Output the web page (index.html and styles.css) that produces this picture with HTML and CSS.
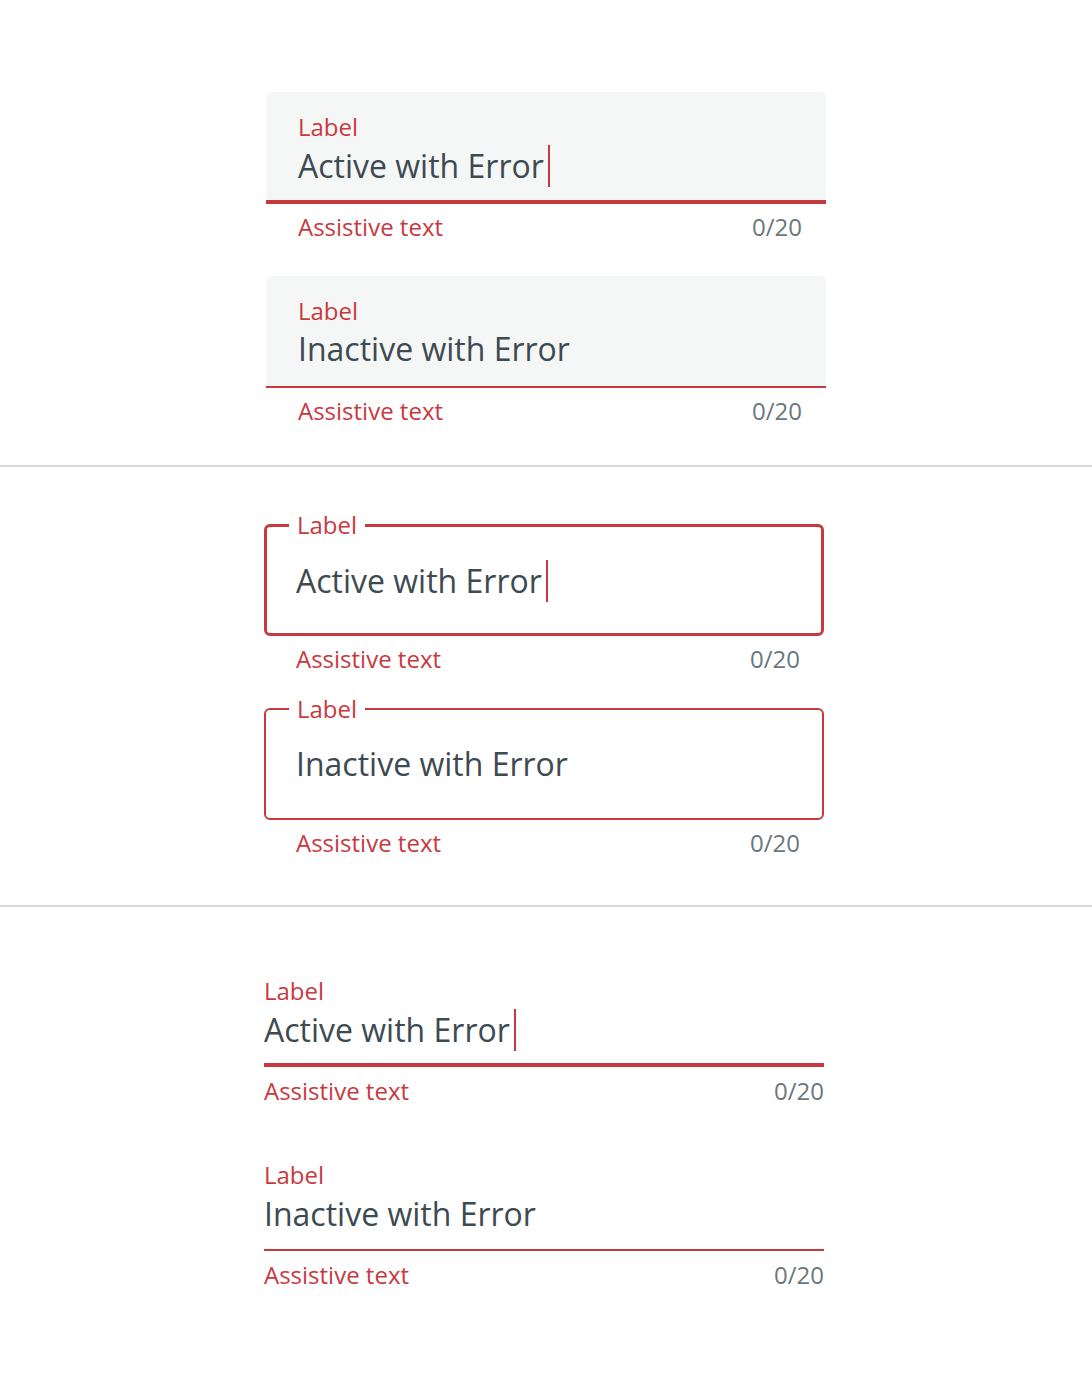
FILE: index.html
```html
<!DOCTYPE html>
<html lang="en">
<head>
<meta charset="utf-8">
<title>Text fields with error</title>
<link rel="stylesheet" href="styles.css">
</head>
<body>
  <section class="group group-filled">
    <div class="field field-filled is-active">
      <div class="box">
        <div class="label">Label</div>
        <div class="value">Active with Error<span class="caret"></span></div>
      </div>
      <div class="helper"><span>Assistive text</span><span class="count">0/20</span></div>
    </div>
    <div class="field field-filled">
      <div class="box">
        <div class="label">Label</div>
        <div class="value">Inactive with Error</div>
      </div>
      <div class="helper"><span>Assistive text</span><span class="count">0/20</span></div>
    </div>
  </section>
  <hr class="divider">
  <section class="group group-outlined">
    <div class="field field-outlined is-active">
      <div class="box">
        <div class="label">Label</div>
        <div class="value">Active with Error<span class="caret"></span></div>
      </div>
      <div class="helper"><span>Assistive text</span><span class="count">0/20</span></div>
    </div>
    <div class="field field-outlined">
      <div class="box">
        <div class="label">Label</div>
        <div class="value">Inactive with Error</div>
      </div>
      <div class="helper"><span>Assistive text</span><span class="count">0/20</span></div>
    </div>
  </section>
  <hr class="divider">
  <section class="group group-line">
    <div class="field field-line is-active">
      <div class="box">
        <div class="label">Label</div>
        <div class="value">Active with Error<span class="caret"></span></div>
      </div>
      <div class="helper"><span>Assistive text</span><span class="count">0/20</span></div>
    </div>
    <div class="field field-line">
      <div class="box">
        <div class="label">Label</div>
        <div class="value">Inactive with Error</div>
      </div>
      <div class="helper"><span>Assistive text</span><span class="count">0/20</span></div>
    </div>
  </section>
</body>
</html>
```

FILE: styles.css
```css
html, body {
  margin: 0;
  padding: 0;
  background: #ffffff;
}

body {
  font-family: "Open Sans", "Noto Sans", "Liberation Sans", sans-serif;
  color: #3d4a52;
  height: 1394px;
  overflow: hidden;
}

.group {
  display: flex;
  flex-direction: column;
  gap: 32px;
  width: 560px;
}

.group-filled {
  margin-left: 266px;
  padding: 92px 0 38px;
  gap: 33px;
}

.group-outlined {
  margin-left: 264px;
  padding: 57px 0 46px;
  gap: 33px;
}

.group-line {
  margin-left: 264px;
  padding: 48px 0 0;
}

.divider {
  margin: 0;
  border: 0;
  height: 2px;
  background: #d6d8d8;
}

.field {
  display: flex;
  flex-direction: column;
}

.box {
  position: relative;
  box-sizing: border-box;
  height: 112px;
}

.label {
  font-size: 24px;
  line-height: 32px;
  color: #c8393f;
}

.value {
  font-size: 32px;
  line-height: 40px;
  color: #3d4a52;
  white-space: nowrap;
}

.caret {
  display: inline-block;
  width: 2px;
  height: 42px;
  margin-left: 4px;
  vertical-align: -9px;
  background: #c8393f;
}

.helper {
  display: flex;
  justify-content: space-between;
  margin-top: 8px;
  font-size: 24px;
  line-height: 32px;
  color: #c8393f;
}

.count {
  color: #6b777d;
}

/* filled */
.field-filled .box {
  background: #f5f7f6;
  border-radius: 6px 6px 0 0;
  border-bottom: 2px solid #c8393f;
  padding: 19px 32px 0;
}

.field-filled.is-active .box {
  border-bottom-width: 4px;
}

.field-filled .value {
  margin-top: 2px;
}

.field-filled .helper {
  margin-top: 7px;
  padding: 0 24px 0 32px;
}

/* outlined */
.field-outlined .box {
  border: 2px solid #c8393f;
  border-radius: 6px;
  padding: 34px 30px 0;
}

.field-outlined.is-active .box {
  border-width: 3px;
  padding: 33px 29px 0;
}

.field-outlined .label {
  position: absolute;
  top: -17px;
  left: 23px;
  padding: 0 8px;
  background: #ffffff;
}

.field-outlined.is-active .label {
  top: -18px;
  left: 22px;
}

.field-outlined .helper {
  margin-top: 7px;
  padding: 0 24px 0 32px;
}

/* underline only */
.field-line .box {
  border-bottom: 2px solid #c8393f;
  padding-top: 20px;
}

.field-line.is-active .box {
  border-bottom-width: 4px;
}

.field-line .value {
  margin-top: 2px;
}

.field-line:not(.is-active) .value {
  margin-top: 3px;
}
```
